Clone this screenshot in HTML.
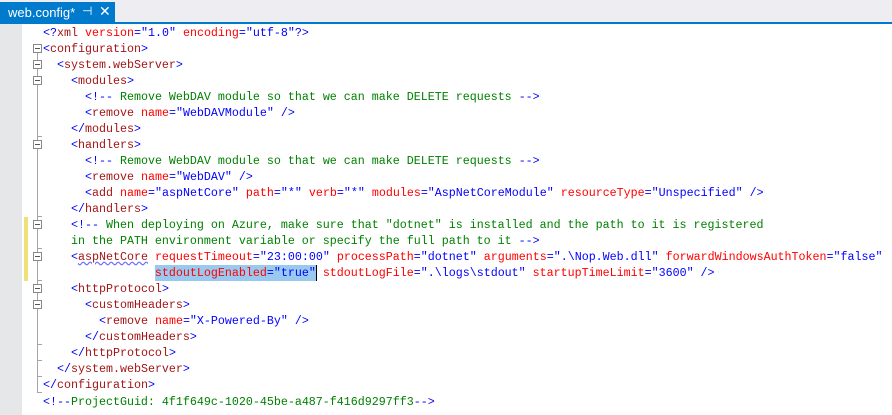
<!DOCTYPE html>
<html><head><style>
body{margin:0;width:892px;height:415px;background:#fff;overflow:hidden;position:relative;font-family:"Liberation Mono",monospace;}
#top{position:absolute;left:0;top:0;width:892px;height:24px;background:#eeeef2;}
#tab{position:absolute;left:0;top:2px;width:115px;height:22px;background:#007acc;color:#fff;font-family:"Liberation Sans",sans-serif;font-size:13px;}
#tabline{position:absolute;left:0;top:22px;width:892px;height:2px;background:#007acc;}
#gut{position:absolute;left:0;top:24px;width:22px;height:391px;background:#e6e7e8;}
.l{position:absolute;left:43px;height:16px;line-height:16px;font-size:11.67px;white-space:pre;}
.b{color:#0000ff}.t{color:#a31515}.a{color:#ff0000}.c{color:#008000}.k{color:#000}
.box{position:absolute;left:33px;width:7px;height:7px;border:1px solid #888;background:#fff;}
.box:after{content:"";position:absolute;left:1px;top:3px;width:5px;height:1px;background:#555;}
.vl{position:absolute;left:37px;width:1px;background:#a5a5a5;}
.tk{position:absolute;left:37px;width:5px;height:1px;background:#a5a5a5;}
.y{position:absolute;left:24px;width:4px;background:#efe17a;}
</style></head><body>
<div id="top"></div>
<div id="tabline"></div>
<div id="tab"><span style="position:absolute;left:8px;top:3px">web.config*</span><span style="position:absolute;left:82px;top:2px;font-size:12px">⊣</span><span style="position:absolute;left:99px;top:1px;font-size:14px">✕</span></div>
<div id="gut"></div>
<div class="y" style="top:217px;height:64px"></div>
<div class="vl" style="top:45px;height:348px"></div>
<div class="tk" style="top:136px"></div><div class="tk" style="top:216px"></div><div class="tk" style="top:248px"></div><div class="tk" style="top:280px"></div><div class="tk" style="top:344px"></div><div class="tk" style="top:360px"></div><div class="tk" style="top:376px"></div><div class="tk" style="top:392px"></div>
<div class="box" style="top:44px"></div><div class="box" style="top:60px"></div><div class="box" style="top:76px"></div><div class="box" style="top:140px"></div><div class="box" style="top:220px"></div><div class="box" style="top:252px"></div><div class="box" style="top:284px"></div><div class="box" style="top:300px"></div>
<div style="position:absolute;left:155px;top:265px;width:161px;height:16px;background:#99c9ef"></div>
<div style="position:absolute;left:316px;top:265px;width:1px;height:16px;background:#000"></div>
<div class="l" style="top:25px"><span class="b">&lt;?</span><span class="t">xml</span> <span class="a">version</span><span class="b">="1.0"</span> <span class="a">encoding</span><span class="b">="utf-8"?&gt;</span></div>
<div class="l" style="top:41px"><span class="b">&lt;</span><span class="t">configuration</span><span class="b">&gt;</span></div>
<div class="l" style="top:57px">  <span class="b">&lt;</span><span class="t">system.webServer</span><span class="b">&gt;</span></div>
<div class="l" style="top:73px">    <span class="b">&lt;</span><span class="t">modules</span><span class="b">&gt;</span></div>
<div class="l" style="top:89px">      <span class="b">&lt;!--</span><span class="c"> Remove WebDAV module so that we can make DELETE requests </span><span class="b">--&gt;</span></div>
<div class="l" style="top:105px">      <span class="b">&lt;</span><span class="t">remove</span> <span class="a">name</span><span class="b">="WebDAVModule" /&gt;</span></div>
<div class="l" style="top:121px">    <span class="b">&lt;/</span><span class="t">modules</span><span class="b">&gt;</span></div>
<div class="l" style="top:137px">    <span class="b">&lt;</span><span class="t">handlers</span><span class="b">&gt;</span></div>
<div class="l" style="top:153px">      <span class="b">&lt;!--</span><span class="c"> Remove WebDAV module so that we can make DELETE requests </span><span class="b">--&gt;</span></div>
<div class="l" style="top:169px">      <span class="b">&lt;</span><span class="t">remove</span> <span class="a">name</span><span class="b">="WebDAV" /&gt;</span></div>
<div class="l" style="top:185px">      <span class="b">&lt;</span><span class="t">add</span> <span class="a">name</span><span class="b">="aspNetCore"</span> <span class="a">path</span><span class="b">="*"</span> <span class="a">verb</span><span class="b">="*"</span> <span class="a">modules</span><span class="b">="AspNetCoreModule"</span> <span class="a">resourceType</span><span class="b">="Unspecified" /&gt;</span></div>
<div class="l" style="top:201px">    <span class="b">&lt;/</span><span class="t">handlers</span><span class="b">&gt;</span></div>
<div class="l" style="top:217px">    <span class="b">&lt;!--</span><span class="c"> When deploying on Azure, make sure that "dotnet" is installed and the path to it is registered</span></div>
<div class="l" style="top:233px"><span class="c">    in the PATH environment variable or specify the full path to it </span><span class="b">--&gt;</span></div>
<div class="l" style="top:249px">    <span class="b">&lt;</span><span class="t" style="text-decoration:underline wavy #6b6bff">aspNetCore</span> <span class="a">requestTimeout</span><span class="b">="23:00:00"</span> <span class="a">processPath</span><span class="b">="dotnet"</span> <span class="a">arguments</span><span class="b">=".\Nop.Web.dll"</span> <span class="a">forwardWindowsAuthToken</span><span class="b">="false"</span></div>
<div class="l" style="top:265px">                <span class="a">stdoutLogEnabled</span><span class="b">="true"</span> <span class="a">stdoutLogFile</span><span class="b">=".\logs\stdout"</span> <span class="a">startupTimeLimit</span><span class="b">="3600" /&gt;</span></div>
<div class="l" style="top:281px">    <span class="b">&lt;</span><span class="t">httpProtocol</span><span class="b">&gt;</span></div>
<div class="l" style="top:297px">      <span class="b">&lt;</span><span class="t">customHeaders</span><span class="b">&gt;</span></div>
<div class="l" style="top:313px">        <span class="b">&lt;</span><span class="t">remove</span> <span class="a">name</span><span class="b">="X-Powered-By" /&gt;</span></div>
<div class="l" style="top:329px">      <span class="b">&lt;/</span><span class="t">customHeaders</span><span class="b">&gt;</span></div>
<div class="l" style="top:345px">    <span class="b">&lt;/</span><span class="t">httpProtocol</span><span class="b">&gt;</span></div>
<div class="l" style="top:361px">  <span class="b">&lt;/</span><span class="t">system.webServer</span><span class="b">&gt;</span></div>
<div class="l" style="top:377px"><span class="b">&lt;/</span><span class="t">configuration</span><span class="b">&gt;</span></div>
<div class="l" style="top:394px"><span class="b">&lt;!--</span><span class="c">ProjectGuid: 4f1f649c-1020-45be-a487-f416d9297ff3</span><span class="b">--&gt;</span></div>
</body></html>
